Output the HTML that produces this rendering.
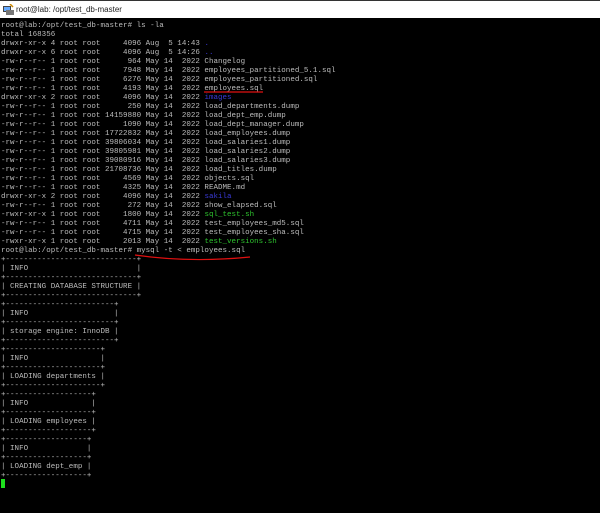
<!DOCTYPE html>
<html><head><meta charset="utf-8"><style>
html,body{margin:0;padding:0;width:600px;height:513px;overflow:hidden;background:#000}
.top{position:absolute;left:0;top:0;width:600px;height:1px;background:#333}
.bar{position:absolute;left:0;top:1px;width:600px;height:17px;background:#fff;font:8px "Liberation Sans",sans-serif;color:#222}
.bar span{position:absolute;left:16px;top:4px}
pre{position:absolute;left:1px;top:21.5px;margin:0;font:7.5px/9px "Liberation Mono",monospace;color:#bdbdbd;letter-spacing:0.02px}
.b{color:#3a3ad8}.g{color:#2ec42e}
.cur{position:absolute;left:1px;top:479px;width:4px;height:9px;background:#1ee01e}
</style></head><body>
<div class="top"></div>
<div class="bar"><svg style="position:absolute;left:3px;top:3px" width="11" height="11"><rect x="0" y="2" width="8" height="6" fill="#444"/><rect x="1" y="3" width="6" height="4" fill="#6af"/><rect x="3" y="6" width="8" height="5" fill="#777"/><path d="M7 0 L10 3" stroke="#c80" stroke-width="1.5"/></svg><span>root@lab: /opt/test_db-master</span></div>
<pre>root@lab:/opt/test_db-master# ls -la
total 168356
drwxr-xr-x 4 root root     4096 Aug  5 14:43 <span class="b">.</span>
drwxr-xr-x 6 root root     4096 Aug  5 14:26 <span class="b">..</span>
-rw-r--r-- 1 root root      964 May 14  2022 Changelog
-rw-r--r-- 1 root root     7948 May 14  2022 employees_partitioned_5.1.sql
-rw-r--r-- 1 root root     6276 May 14  2022 employees_partitioned.sql
-rw-r--r-- 1 root root     4193 May 14  2022 employees.sql
drwxr-xr-x 2 root root     4096 May 14  2022 <span class="b">images</span>
-rw-r--r-- 1 root root      250 May 14  2022 load_departments.dump
-rw-r--r-- 1 root root 14159880 May 14  2022 load_dept_emp.dump
-rw-r--r-- 1 root root     1090 May 14  2022 load_dept_manager.dump
-rw-r--r-- 1 root root 17722832 May 14  2022 load_employees.dump
-rw-r--r-- 1 root root 39806034 May 14  2022 load_salaries1.dump
-rw-r--r-- 1 root root 39805981 May 14  2022 load_salaries2.dump
-rw-r--r-- 1 root root 39080916 May 14  2022 load_salaries3.dump
-rw-r--r-- 1 root root 21708736 May 14  2022 load_titles.dump
-rw-r--r-- 1 root root     4569 May 14  2022 objects.sql
-rw-r--r-- 1 root root     4325 May 14  2022 README.md
drwxr-xr-x 2 root root     4096 May 14  2022 <span class="b">sakila</span>
-rw-r--r-- 1 root root      272 May 14  2022 show_elapsed.sql
-rwxr-xr-x 1 root root     1800 May 14  2022 <span class="g">sql_test.sh</span>
-rw-r--r-- 1 root root     4711 May 14  2022 test_employees_md5.sql
-rw-r--r-- 1 root root     4715 May 14  2022 test_employees_sha.sql
-rwxr-xr-x 1 root root     2013 May 14  2022 <span class="g">test_versions.sh</span>
root@lab:/opt/test_db-master# mysql -t &lt; employees.sql
+-----------------------------+
| INFO                        |
+-----------------------------+
| CREATING DATABASE STRUCTURE |
+-----------------------------+
+------------------------+
| INFO                   |
+------------------------+
| storage engine: InnoDB |
+------------------------+
+---------------------+
| INFO                |
+---------------------+
| LOADING departments |
+---------------------+
+-------------------+
| INFO              |
+-------------------+
| LOADING employees |
+-------------------+
+------------------+
| INFO             |
+------------------+
| LOADING dept_emp |
+------------------+</pre>
<div class="cur"></div>
<svg style="position:absolute;left:0;top:0" width="600" height="513"><path d="M204 92 L263 92" stroke="#e01010" stroke-width="1.2" fill="none"/><path d="M135 255 Q190 263 250 257" stroke="#e01010" stroke-width="1.2" fill="none"/></svg>
</body></html>
